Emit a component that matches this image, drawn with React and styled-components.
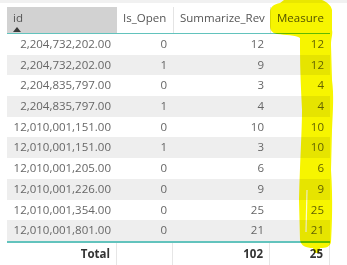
import React from 'react';
import styled, { createGlobalStyle } from 'styled-components';

const Global = createGlobalStyle`
  html, body { margin: 0; padding: 0; background: #fff; }
  body { font-family: "Open Sans", "Noto Sans", sans-serif; }
`;

const COLS = '110px 56px 97px 60px';
const TEAL = '#62c3bd';

const Page = styled.div`
  position: relative;
  width: 347px;
  height: 265px;
  overflow: hidden;
  background: #fff;
`;

const TopBand = styled.div`
  height: 3px;
  background: #f1f1f1;
`;

const Table = styled.div`
  margin: 4px 0 0 7px;
  width: 323px;
  font-size: 11.5px;
`;

const HeaderRow = styled.div`
  display: grid;
  grid-template-columns: ${COLS};
  height: 26px;
  border-bottom: 1px solid ${TEAL};
  box-sizing: content-box;
`;

const HeaderCell = styled.div`
  position: relative;
  padding: 3px 6px 0;
  line-height: 16px;
  color: #555;
  white-space: nowrap;
  background: ${p => (p.$sorted ? '#d2d2d2' : 'transparent')};
  border-left: ${p => (p.$sep ? '1px solid #e4e4e4' : '0')};
  box-sizing: border-box;
`;

const SortArrow = styled.svg`
  display: block;
  margin-top: 1px;
  margin-left: 0px;
`;

const Body = styled.div``;

const Row = styled.div`
  display: grid;
  grid-template-columns: ${COLS};
  height: 20.7px;
  background: ${p => (p.$alt ? '#eeeeee' : '#fff')};
`;

const Cell = styled.div`
  text-align: right;
  padding-right: 6px;
  line-height: 20.7px;
  color: #666;
  white-space: nowrap;
`;

const TotalRow = styled.div`
  display: grid;
  grid-template-columns: ${COLS};
  height: 22px;
  border-top: 2px solid ${TEAL};
`;

const TotalCell = styled.div`
  text-align: right;
  padding-right: 6px;
  line-height: 21px;
  font-weight: 700;
  color: #333;
  border-right: 1px solid #e6e6e6;
  white-space: nowrap;
`;

const Highlight = styled.svg`
  position: absolute;
  left: 0;
  top: 0;
  mix-blend-mode: multiply;
  pointer-events: none;
`;

const rows = [
  ['2,204,732,202.00', '0', '12', '12'],
  ['2,204,732,202.00', '1', '9', '12'],
  ['2,204,835,797.00', '0', '3', '4'],
  ['2,204,835,797.00', '1', '4', '4'],
  ['12,010,001,151.00', '0', '10', '10'],
  ['12,010,001,151.00', '1', '3', '10'],
  ['12,010,001,205.00', '0', '6', '6'],
  ['12,010,001,226.00', '0', '9', '9'],
  ['12,010,001,354.00', '0', '25', '25'],
  ['12,010,001,801.00', '0', '21', '21'],
];

export default function App() {
  return (
    <>
      <Global />
      <Page>
        <TopBand />
        <Table>
          <HeaderRow>
            <HeaderCell $sorted>
              id
              <SortArrow width="8" height="5" viewBox="0 0 8 5">
                <path d="M0 5 L4 0 L8 5 Z" fill="#3a3a3a" />
              </SortArrow>
            </HeaderCell>
            <HeaderCell>Is_Open</HeaderCell>
            <HeaderCell $sep>Summarize_Rev</HeaderCell>
            <HeaderCell $sep>Measure</HeaderCell>
          </HeaderRow>
          <Body>
            {rows.map((r, i) => (
              <Row key={i} $alt={i % 2 === 1}>
                {r.map((c, j) => (
                  <Cell key={j}>{c}</Cell>
                ))}
              </Row>
            ))}
          </Body>
          <TotalRow>
            <TotalCell>Total</TotalCell>
            <TotalCell />
            <TotalCell>102</TotalCell>
            <TotalCell>25</TotalCell>
          </TotalRow>
        </Table>
        <Highlight width="347" height="265" viewBox="0 0 347 265">
          <path
            fill="#f7f500"
            d="M284 0 L322 0 C327 2 331 5 332 10 L332 30 C333 34 331 38 331 45 L332 80 C334 95 333 110 332 130 L331 170 C333 200 332 225 331 242 C330 247 326 248 320 248 L319 253 L314 253 L313 248 C306 248 301 246 300 240 L299 200 C300 160 302 130 302 110 C301 90 300 70 300 50 L300 38 C296 35 285 35 277 34 C272 33 270 30 270 26 L270 12 C270 7 274 4 280 3 L284 0 Z"
          />
          <path d="M307 190 L306 232" stroke="#fdfbd0" strokeWidth="1.2" fill="none" />
        </Highlight>
      </Page>
    </>
  );
}
